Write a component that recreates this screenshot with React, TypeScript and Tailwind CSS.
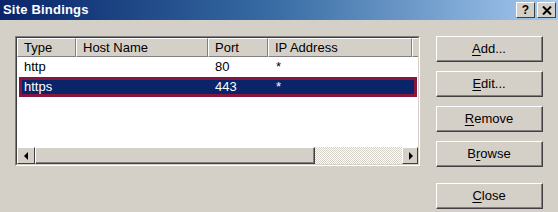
import React from "react";

const font = { fontFamily: '"Liberation Sans", Arial, sans-serif' };

function Btn({ label, u, className = "" }: { label: string; u: number; className?: string }) {
  const before = label.slice(0, u);
  const ch = label[u];
  const after = label.slice(u + 1);
  return (
    <div
      className={`w-[107px] h-[26px] bg-[#d4d0c8] border-t border-l border-t-white border-l-white border-b border-r border-b-[#404040] border-r-[#404040] ${className}`}
    >
      <div className="w-full h-full border-b border-r border-b-[#808080] border-r-[#808080] flex items-center justify-center text-[13px] text-black">
        {before}
        <span className="underline underline-offset-2">{ch}</span>
        {after}
      </div>
    </div>
  );
}

function HeaderCell({ label, w }: { label: string; w: string }) {
  return (
    <div
      className={`${w} h-[19px] bg-[#d4d0c8] border-t border-l border-t-white border-l-white border-r border-b border-r-[#808080] border-b-[#808080] flex items-center pl-[6px] text-[13px] text-black shrink-0`}
    >
      {label}
    </div>
  );
}

export default function App() {
  return (
    <div className="w-[558px] h-[212px] bg-[#d4d0c8] overflow-hidden flex flex-col" style={font}>
      <div className="h-[20px] flex items-center justify-between bg-gradient-to-r from-[#0a246a] via-[#3a6ea5] to-[#a6caf0] pl-[3px] pr-[2px]">
        <span className="text-white font-bold text-[13px] tracking-[0.2px]">Site Bindings</span>
        <div className="flex gap-[2px] items-center">
          <div className="w-[19px] h-[16px] bg-[#d4d0c8] border-t border-l border-t-white border-l-white border-b border-r border-b-[#404040] border-r-[#404040] flex items-center justify-center text-[12px] font-bold leading-none text-black">
            ?
          </div>
          <div className="w-[19px] h-[16px] bg-[#d4d0c8] border-t border-l border-t-white border-l-white border-b border-r border-b-[#404040] border-r-[#404040] flex items-center justify-center">
            <svg width="10" height="9" viewBox="0 0 10 9">
              <path d="M1 0.5 L9 8.5 M9 0.5 L1 8.5" stroke="#000" strokeWidth="2" />
            </svg>
          </div>
        </div>
      </div>
      <div className="flex pl-[15px] pt-[16px] gap-[16px]">
        {/* list box */}
        <div className="w-[405px] h-[130px] border-t border-l border-t-[#808080] border-l-[#808080] border-b border-r border-b-white border-r-white">
          <div className="w-full h-full border-t border-l border-t-[#404040] border-l-[#404040] border-b border-r border-b-[#d4d0c8] border-r-[#d4d0c8] bg-white flex flex-col">
            <div className="flex">
              <HeaderCell label="Type" w="w-[59px]" />
              <HeaderCell label="Host Name" w="w-[132px]" />
              <HeaderCell label="Port" w="w-[60px]" />
              <HeaderCell label="IP Address" w="w-[144px]" />
              <div className="flex-1 h-[19px] bg-[#d4d0c8] border-t border-l border-t-white border-l-white border-b border-b-[#808080]" />
            </div>
            <div className="flex h-[20px] items-center text-[13px] text-black">
              <span className="w-[59px] pl-[7px]">http</span>
              <span className="w-[132px]" />
              <span className="w-[60px] pl-[7px]">80</span>
              <span className="pl-[8px]">*</span>
            </div>
            <div className="ml-[2px] mr-[1px] h-[20px] border-[3px] border-[#86163f] bg-[#0a246a] flex items-center text-[13px] text-white">
              <span className="w-[54px] pl-[2px] shrink-0">https</span>
              <span className="w-[132px] shrink-0" />
              <span className="w-[60px] pl-[7px] shrink-0">443</span>
              <span className="pl-[8px]">*</span>
            </div>
            <div className="flex-1" />
            {/* scrollbar */}
            <div className="h-[17px] flex bg-[#d4d0c8]">
              <div className="w-[18px] h-full border-t border-l border-t-white border-l-white border-b border-r border-b-[#404040] border-r-[#404040] flex items-center justify-center">
                <svg width="5" height="8" viewBox="0 0 5 8"><path d="M4 0 L0 4 L4 8 Z" fill="#000" /></svg>
              </div>
              <div className="w-[280px] h-full border-t border-l border-t-white border-l-white border-b border-r border-b-[#404040] border-r-[#404040]">
                <div className="w-full h-full border-b border-r border-b-[#808080] border-r-[#808080]" />
              </div>
              <div className="flex-1 h-full bg-[repeating-conic-gradient(#ffffff_0%_25%,#d4d0c8_0%_50%)] bg-[length:2px_2px]" />
              <div className="w-[16px] h-full border-t border-l border-t-white border-l-white border-b border-r border-b-[#404040] border-r-[#404040] flex items-center justify-center">
                <svg width="5" height="8" viewBox="0 0 5 8"><path d="M1 0 L5 4 L1 8 Z" fill="#000" /></svg>
              </div>
            </div>
          </div>
        </div>
        {/* buttons */}
        <div className="flex flex-col">
          <Btn label="Add..." u={0} />
          <Btn label="Edit..." u={0} className="mt-[9px]" />
          <Btn label="Remove" u={0} className="mt-[9px]" />
          <Btn label="Browse" u={1} className="mt-[9px]" />
          <Btn label="Close" u={0} className="mt-[16px]" />
        </div>
      </div>
    </div>
  );
}
